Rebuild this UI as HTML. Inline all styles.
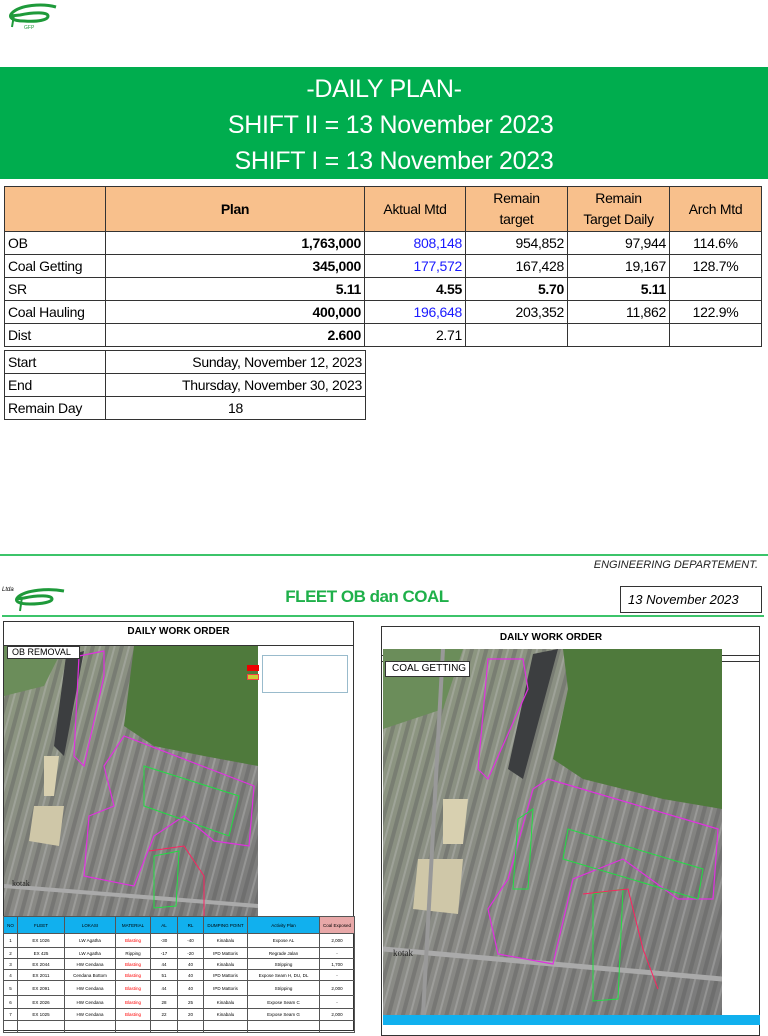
<!DOCTYPE html>
<html><head><meta charset="utf-8"><style>
*{margin:0;padding:0;box-sizing:border-box}
body{width:768px;height:1024px;overflow:hidden;background:#fff;font-family:"Liberation Sans",sans-serif;position:relative}
.abs{position:absolute}
table{border-collapse:collapse;position:absolute;table-layout:fixed}
.t1 td{border:1.5px solid #333;font-size:14px;padding:0 3px;height:23px;white-space:nowrap;letter-spacing:-0.3px}
.r{text-align:right}.c{text-align:center}.b{font-weight:bold}.bl{color:#1a1aff}
.hd td{background:#f8c08c;height:45px;text-align:center;line-height:21px}
.st td{font-size:4.5px;border:1px solid #555;text-align:center;padding:0 1px;white-space:nowrap;overflow:hidden;line-height:5px}
</style></head><body>
<svg class="abs" style="left:4px;top:3px" width="56" height="28" viewBox="0 0 56 28"><path d="M52 4 C38 0 16 2 8 10 C4 14 8 18 20 18 C34 19 44 17 44 13 C44 9 30 9 16 12 L6 13" fill="none" stroke="#1e9a3a" stroke-width="3"/><path d="M10 12 L8 24" stroke="#1e9a3a" stroke-width="2"/><text x="20" y="26" font-size="5" fill="#1e9a3a">GFP</text></svg>
<div class="abs" style="left:0;top:67px;width:768px;height:112px;background:#00ad4e;color:#fff;text-align:center;font-size:25px;line-height:36px;padding-top:4px;letter-spacing:-0.3px">-DAILY PLAN-<br>&nbsp;&nbsp;SHIFT II = 13 November 2023<br>&nbsp;&nbsp;&nbsp;SHIFT I = 13 November 2023</div>
<table class="t1" style="left:4px;top:186px;width:757px">
<colgroup><col style="width:101px"><col style="width:259px"><col style="width:101px"><col style="width:102px"><col style="width:102px"><col style="width:92px"></colgroup>
<tr class="hd"><td></td><td class="b">Plan</td><td>Aktual Mtd</td><td>Remain<br>target</td><td>Remain<br>Target Daily</td><td>Arch Mtd</td></tr>
<tr><td>OB</td><td class="r b">1,763,000</td><td class="r bl">808,148</td><td class="r">954,852</td><td class="r">97,944</td><td class="c">114.6%</td></tr>
<tr><td>Coal Getting</td><td class="r b">345,000</td><td class="r bl">177,572</td><td class="r">167,428</td><td class="r">19,167</td><td class="c">128.7%</td></tr>
<tr><td>SR</td><td class="r b">5.11</td><td class="r b">4.55</td><td class="r b">5.70</td><td class="r b">5.11</td><td></td></tr>
<tr><td>Coal Hauling</td><td class="r b">400,000</td><td class="r bl">196,648</td><td class="r">203,352</td><td class="r">11,862</td><td class="c">122.9%</td></tr>
<tr><td>Dist</td><td class="r b">2.600</td><td class="r">2.71</td><td></td><td></td><td></td></tr>
</table>
<table class="t1" style="left:4px;top:350px;width:361px">
<colgroup><col style="width:101px"><col style="width:260px"></colgroup>
<tr><td>Start</td><td class="r">Sunday, November 12, 2023</td></tr>
<tr><td>End</td><td class="r">Thursday, November 30, 2023</td></tr>
<tr><td>Remain Day</td><td class="c">18</td></tr>
</table>
<div class="abs" style="left:0;top:554px;width:768px;height:2px;background:#3cc46a"></div>
<div class="abs" style="right:10px;top:559px;font-size:11px;font-style:italic;color:#222">ENGINEERING DEPARTEMENT.</div>
<svg class="abs" style="left:2px;top:585px" width="66" height="28" viewBox="0 0 66 28"><text x="0" y="6" font-size="6" font-style="italic">Ltda</text><path d="M62 6 C46 3 24 5 16 12 C12 16 16 19 28 19 C40 19 50 17 50 14 C50 10 36 10 22 13 L14 14" fill="none" stroke="#1e9a3a" stroke-width="3"/><path d="M20 12 L18 26" stroke="#1e9a3a" stroke-width="2"/></svg>
<div class="abs" style="left:0;width:734px;top:587px;text-align:center;font-weight:bold;font-size:17px;letter-spacing:-0.5px;color:#1fb04a">FLEET OB dan COAL</div>
<div class="abs" style="left:620px;top:586px;width:142px;height:27px;border:1.5px solid #333;font-size:13px;font-style:italic;padding:5px 0 0 7px">13 November 2023</div>
<div class="abs" style="left:2px;top:615px;width:762px;height:2px;background:#3cc46a"></div>

<div class="abs" style="left:3px;top:621px;width:351px;height:410px;border:1.5px solid #333"></div>
<div class="abs" style="left:3px;top:626px;width:351px;text-align:center;font-weight:bold;font-size:10px">DAILY WORK ORDER</div>
<div class="abs" style="left:3px;top:645px;width:351px;height:1px;background:#333"></div>
<svg class="abs" style="left:4px;top:646px" width="254" height="270" viewBox="0 0 254 270">
<defs><linearGradient id="g1" x1="0" y1="0" x2="1" y2="1"><stop offset="0" stop-color="#8d9a7e"/><stop offset=".5" stop-color="#8a8a86"/><stop offset="1" stop-color="#7a7a7a"/></linearGradient>
<pattern id="st" width="14" height="30" patternUnits="userSpaceOnUse" patternTransform="rotate(15)"><rect width="14" height="30" fill="none"/><rect width="4" height="30" fill="#555" opacity=".35"/><rect x="8" width="2" height="30" fill="#ccc" opacity=".3"/></pattern></defs>
<rect width="254" height="270" fill="url(#g1)"/>
<rect width="254" height="270" fill="url(#st)"/>
<path d="M130 0 L254 0 L254 120 L200 110 L150 100 L120 80 Z" fill="#4f7a3c"/>
<path d="M0 0 L60 0 L40 40 L0 50Z" fill="#6b8d5a"/>
<path d="M62 10 L80 5 L60 110 L50 100Z" fill="#3c3e40"/>
<path d="M30 160 L60 160 L55 200 L25 195Z" fill="#cfc7a8"/>
<path d="M40 110 L55 110 L50 150 L40 150Z" fill="#d8d0b0"/>
<path d="M0 240 L254 260" stroke="#aaa" stroke-width="4"/>
<path d="M75 10 L100 5 L100 30 L80 120 L70 110Z" fill="none" stroke="#e030e0" stroke-width="1.2"/>
<path d="M120 90 L250 140 L245 200 L210 195 L180 170 L150 190 L130 240 L80 230 L85 170 L110 160 L100 120Z" fill="none" stroke="#e030e0" stroke-width="1.2"/>
<path d="M140 120 L235 150 L225 190 L140 160Z" fill="none" stroke="#22dd44" stroke-width="1"/>
<path d="M150 210 L175 205 L172 260 L150 262Z" fill="none" stroke="#22dd44" stroke-width="1"/>
<path d="M145 205 L180 200 L200 230 L200 270" fill="none" stroke="#ff2060" stroke-width="1"/>
<text x="8" y="240" font-family="Liberation Serif" font-size="8" fill="#222">kotak</text>
</svg>
<div class="abs" style="left:7px;top:646px;width:73px;height:13px;background:#fff;border:1px solid #333;font-size:9px;padding-left:4px">OB REMOVAL</div>
<div class="abs" style="left:262px;top:655px;width:86px;height:38px;border:1px solid #9bc"></div>
<div class="abs" style="left:247px;top:665px;width:12px;height:6px;background:#e00"></div>
<div class="abs" style="left:247px;top:674px;width:12px;height:6px;background:#cc3;border:1px solid #e44"></div>
<table class="st" style="left:3px;top:916px;width:351px">
<colgroup><col style="width:14px"><col style="width:47px"><col style="width:51px"><col style="width:35px"><col style="width:27px"><col style="width:26px"><col style="width:44px"><col style="width:72px"><col style="width:35px"></colgroup>
<tr style="height:17px;background:#11b0ee"><td>NO</td><td>FLEET</td><td>LOKASI</td><td>MATERIAL</td><td>AL</td><td>RL</td><td>DUMPING POINT</td><td>Activity Plan</td><td style="background:#e8a8a8">Coal Exposed</td></tr>
<tr style="height:14px"><td>1</td><td>EX 1026</td><td>LW Agatha</td><td style="color:red">Blasting</td><td>-30</td><td>-40</td><td>Kinabalu</td><td>Expose AL</td><td class="r">2,000</td></tr>
<tr style="height:11px"><td>2</td><td>EX 425</td><td>LW Agatha</td><td>Ripping</td><td>-17</td><td>-20</td><td>IPD Mattoris</td><td>Regrade Jalan</td><td class="r">-</td></tr>
<tr style="height:11px"><td>3</td><td>EX 2044</td><td>HW Cendana</td><td style="color:red">Blasting</td><td>44</td><td>40</td><td>Kinabalu</td><td>Stripping</td><td class="r">1,700</td></tr>
<tr style="height:11px"><td>4</td><td>EX 2011</td><td>Cendana Bottom</td><td style="color:red">Blasting</td><td>51</td><td>40</td><td>IPD Mattoris</td><td>Expose Seam H, DU, DL</td><td class="r">-</td></tr>
<tr style="height:15px"><td>5</td><td>EX 2091</td><td>HW Cendana</td><td style="color:red">Blasting</td><td>44</td><td>40</td><td>IPD Mattoris</td><td>Stripping</td><td class="r">2,000</td></tr>
<tr style="height:13px"><td>6</td><td>EX 2026</td><td>HW Cendana</td><td style="color:red">Blasting</td><td>28</td><td>25</td><td>Kinabalu</td><td>Expose Seam C</td><td class="r">-</td></tr>
<tr style="height:12px"><td>7</td><td>EX 1025</td><td>HW Cendana</td><td style="color:red">Blasting</td><td>22</td><td>20</td><td>Kinabalu</td><td>Expose Seam G</td><td class="r">2,000</td></tr>
<tr style="height:12px"><td></td><td></td><td></td><td></td><td></td><td></td><td></td><td></td><td></td></tr>
</table>

<div class="abs" style="left:381px;top:626px;width:379px;height:410px;border:1.5px solid #333"></div>
<div class="abs" style="left:381px;top:632px;width:340px;text-align:center;font-weight:bold;font-size:10px">DAILY WORK ORDER</div>
<div class="abs" style="left:381px;top:655px;width:379px;height:1px;background:#333"></div>
<div class="abs" style="left:381px;top:661px;width:379px;height:1px;background:#333"></div>
<svg class="abs" style="left:383px;top:649px" width="339" height="366" viewBox="0 0 339 366">
<rect width="339" height="366" fill="url(#g1)"/>
<rect width="339" height="366" fill="url(#st)"/>
<path d="M180 0 L339 0 L339 160 L280 150 L200 130 L170 110 L185 40Z" fill="#4f7a3c"/>
<path d="M0 0 L80 0 L60 60 L0 80Z" fill="#6b8d5a"/>
<path d="M150 5 L175 0 L140 130 L125 120Z" fill="#3c3e40"/>
<path d="M35 210 L80 210 L75 265 L30 260Z" fill="#cfc7a8"/>
<path d="M60 150 L85 150 L80 195 L60 195Z" fill="#d8d0b0"/>
<path d="M0 300 L339 330" stroke="#aaa" stroke-width="5"/>
<path d="M60 0 L40 366" stroke="#999" stroke-width="4"/>
<path d="M105 10 L140 10 L145 40 L105 130 L95 120Z" fill="none" stroke="#e030e0" stroke-width="1.2"/>
<path d="M165 130 L335 180 L330 250 L295 250 L240 210 L190 230 L170 315 L115 305 L105 260 L125 230 L150 140Z" fill="none" stroke="#e030e0" stroke-width="1.2"/>
<path d="M185 180 L320 220 L315 250 L180 210Z" fill="none" stroke="#22dd44" stroke-width="1"/>
<path d="M135 170 L150 160 L145 240 L130 240Z" fill="none" stroke="#22dd44" stroke-width="1"/>
<path d="M210 245 L240 240 L235 350 L210 352Z" fill="none" stroke="#22dd44" stroke-width="1"/>
<path d="M200 245 L245 240 L260 300 L275 340" fill="none" stroke="#ff2060" stroke-width="1"/>
<text x="10" y="307" font-family="Liberation Serif" font-size="9" fill="#222">kotak</text>
</svg>
<div class="abs" style="left:385px;top:661px;width:85px;height:16px;background:#fff;border:1px solid #333;font-size:10px;padding:1px 0 0 6px">COAL GETTING</div>
<div class="abs" style="left:383px;top:1015px;width:377px;height:10px;background:#11b0ee"></div>
</body></html>
